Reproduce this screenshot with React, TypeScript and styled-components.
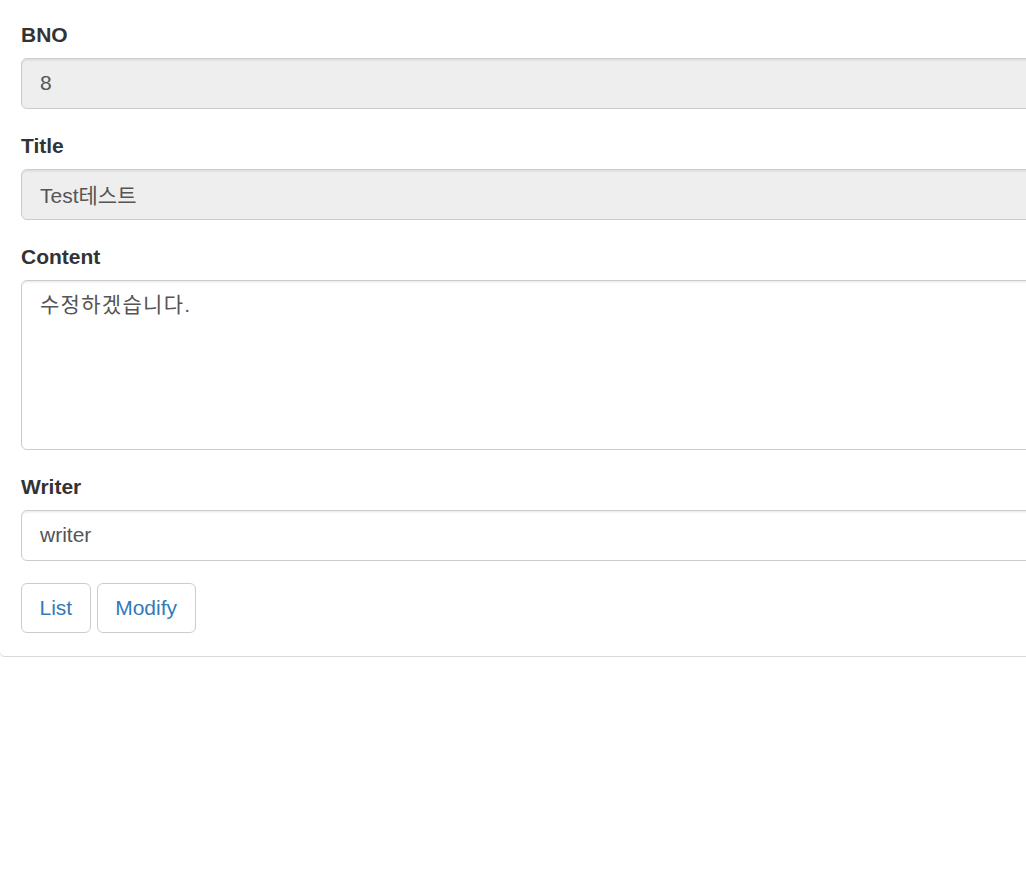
import React from "react";
import styled, { createGlobalStyle } from "styled-components";

const GlobalStyle = createGlobalStyle`
  html, body {
    margin: 0;
    padding: 0;
    overflow: hidden;
    background: #fff;
  }
  * { box-sizing: border-box; }
  body {
    font-family: "Liberation Sans", Arial, "Noto Sans CJK KR", sans-serif;
    font-size: 21px;
    line-height: 30px;
    color: #333;
  }
`;

const Box = styled.div`
  width: 1240px;
  padding: 20px 0 0 21px;
  background: #fff;
  border-bottom: 1px solid #d9d9d9;
  border-radius: 0 0 5px 5px;
  box-shadow: 0 1px 1px rgba(0, 0, 0, 0.06);
`;

const Form = styled.form`
  display: flex;
  flex-direction: column;
  width: 1180px;
`;

const FormGroup = styled.div`
  display: flex;
  flex-direction: column;
  margin-bottom: 22.5px;
`;

const Label = styled.label`
  display: block;
  font-weight: 700;
  font-size: 21px;
  line-height: 30px;
  color: #333;
  margin-bottom: 7.5px;
`;

const Input = styled.input<{ $disabled?: boolean }>`
  display: block;
  width: 100%;
  height: 51px;
  padding: 9px 18px;
  font-family: "Liberation Sans", Arial, "Noto Sans CJK KR", sans-serif;
  font-size: 21px;
  line-height: 30px;
  color: #555;
  background: ${(p) => (p.$disabled ? "#eee" : "#fff")};
  border: 1px solid #ccc;
  border-radius: 6px;
  box-shadow: inset 0 1.5px 1.5px rgba(0, 0, 0, 0.075);
  outline: none;
  margin: 0;
`;

const TextArea = styled.textarea`
  display: block;
  width: 100%;
  height: 170px;
  padding: 9px 18px;
  font-family: "Liberation Sans", Arial, "Noto Sans CJK KR", sans-serif;
  font-size: 21px;
  line-height: 30px;
  letter-spacing: 1.3px;
  color: #555;
  background: #fff;
  border: 1px solid #ccc;
  border-radius: 6px;
  box-shadow: inset 0 1.5px 1.5px rgba(0, 0, 0, 0.075);
  outline: none;
  resize: none;
  margin: 0;
`;

const ButtonRow = styled.div`
  display: flex;
  gap: 6px;
  margin-bottom: 22.5px;
`;

const Button = styled.button`
  height: 50px;
  padding: 9px 17.5px;
  font-family: "Liberation Sans", Arial, sans-serif;
  font-size: 21px;
  line-height: 30px;
  color: #337ab7;
  background: #fff;
  border: 1px solid #ccc;
  border-radius: 6px;
  cursor: pointer;
`;

export default function App() {
  return (
    <>
      <GlobalStyle />
      <Box>
        <Form onSubmit={(e) => e.preventDefault()}>
          <FormGroup>
            <Label>BNO</Label>
            <Input $disabled readOnly value="8" />
          </FormGroup>
          <FormGroup>
            <Label>Title</Label>
            <Input $disabled readOnly value="Test테스트" />
          </FormGroup>
          <FormGroup>
            <Label>Content</Label>
            <TextArea readOnly rows={5} value="수정하겠습니다." />
          </FormGroup>
          <FormGroup>
            <Label>Writer</Label>
            <Input readOnly value="writer" />
          </FormGroup>
          <ButtonRow>
            <Button type="button">List</Button>
            <Button type="button">Modify</Button>
          </ButtonRow>
        </Form>
      </Box>
    </>
  );
}
